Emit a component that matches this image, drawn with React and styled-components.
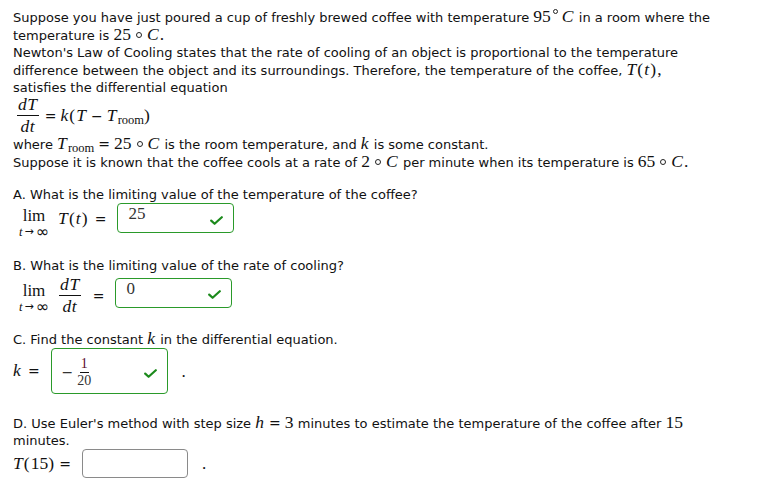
import React from "react";
import styled, { createGlobalStyle } from "styled-components";

const GlobalStyle = createGlobalStyle`
  body {
    margin: 8px;
    background: #ffffff;
  }
`;

export default function App() {
  return (
    <>
      <GlobalStyle />
      <Problem>
        <Para>
          Suppose you have just poured a cup of freshly brewed coffee with temperature{" "}
          <M>
            <N>95</N>
            <Ring $sup />
            <I>C</I>
          </M>{" "}
          in a room where the
          <br />
          temperature is{" "}
          <M>
            <N>25</N>
            <Ring />
            <I>C</I>.
          </M>
          <br />
          Newton's Law of Cooling states that the rate of cooling of an object is proportional to the temperature
          <br />
          difference between the object and its surroundings. Therefore, the temperature of the coffee,{" "}
          <M>
            <I>T</I>(<I>t</I>),
          </M>
          <br />
          satisfies the differential equation
        </Para>
        <Equation>
          <Frac>
            <Num>
              <I>dT</I>
            </Num>
            <Den>
              <I>dt</I>
            </Den>
          </Frac>
          <M>
            <Op>=</Op>
            <I>k</I>(<I>T</I>
            <Op>−</Op>
            <I>T</I>
            <Sub>room</Sub>)
          </M>
        </Equation>
        <Para>
          where{" "}
          <M>
            <I>T</I>
            <Sub>room</Sub>
            <Op>=</Op>
            <N>25</N>
            <Ring />
            <I>C</I>
          </M>{" "}
          is the room temperature, and <M><I>k</I></M> is some constant.
          <br />
          Suppose it is known that the coffee cools at a rate of{" "}
          <M>
            <N>2</N>
            <Ring />
            <I>C</I>
          </M>{" "}
          per minute when its temperature is{" "}
          <M>
            <N>65</N>
            <Ring />
            <I>C</I>.
          </M>
        </Para>

        <Part $top={15}>
          <Question>A. What is the limiting value of the temperature of the coffee?</Question>
          <AnswerRow $left={6}>
            <Lim $mt={6}>
              <LimWord>lim</LimWord>
              <LimUnder>
                <I>t</I>
                <Arrow>→</Arrow>
                <Inf>∞</Inf>
              </LimUnder>
            </Lim>
            <M $ml={9} $mt={7}>
              <I>T</I>(<I>t</I>)<Op $l={6}>=</Op>
            </M>
            <AnswerBox $w={117} $h={30} $ok>
              <BoxValue $top>25</BoxValue>
              <Check />
            </AnswerBox>
          </AnswerRow>
        </Part>

        <Part $top={19}>
          <Question>B. What is the limiting value of the rate of cooling?</Question>
          <AnswerRow $left={6} $mt={2}>
            <Lim $mt={8}>
              <LimWord>lim</LimWord>
              <LimUnder>
                <I>t</I>
                <Arrow>→</Arrow>
                <Inf>∞</Inf>
              </LimUnder>
            </Lim>
            <Frac $ml={10}>
              <Num>
                <I>dT</I>
              </Num>
              <Den>
                <I>dt</I>
              </Den>
            </Frac>
            <M $mt={11} $ml={8}>
              <Op>=</Op>
            </M>
            <AnswerBox $w={117} $h={30} $mt={1.5} $ok>
              <BoxValue $top>0</BoxValue>
              <Check />
            </AnswerBox>
          </AnswerRow>
        </Part>

        <Part $top={15}>
          <Question>
            C. Find the constant <M><I>k</I></M> in the differential equation.
          </Question>
          <AnswerRow $center>
            <M>
              <I>k</I>
              <Op $l={6}>=</Op>
            </M>
            <AnswerBox $w={117} $h={46} $ok>
              <BoxValue>
                <Op $l={0} $r={3}>−</Op>
                <Frac $small>
                  <Num $accent>1</Num>
                  <Den>20</Den>
                </Frac>
              </BoxValue>
              <Check />
            </AnswerBox>
            <Period>.</Period>
          </AnswerRow>
        </Part>

        <Part $top={20}>
          <Question>
            D. Use Euler's method with step size{" "}
            <M>
              <I>h</I>
              <Op>=</Op>
              <N>3</N>
            </M>{" "}
            minutes to estimate the temperature of the coffee after <M><N>15</N></M>
            <br />
            minutes.
          </Question>
          <AnswerRow $center>
            <M>
              <I>T</I>(<N>15</N>)<Op>=</Op>
            </M>
            <AnswerBox $w={106} $h={29} />
            <Period>.</Period>
          </AnswerRow>
        </Part>
      </Problem>
    </>
  );
}

function Check() {
  return (
    <CheckMark viewBox="0 0 13 9" width="13" height="9">
      <path d="M1.2 4.6 L4.6 7.8 L11.8 1.2" fill="none" stroke="#1c8a1c" strokeWidth="2.2" strokeLinecap="round" strokeLinejoin="round" />
    </CheckMark>
  );
}

const serif = `"Liberation Serif", "Times New Roman", serif`;

const Problem = styled.div`
  padding: 0 5px;
  font-family: "DejaVu Sans", Tahoma, sans-serif;
  font-size: 13px;
  line-height: 17px;
  color: #111;
  white-space: nowrap;
`;

const Para = styled.div`
  margin: 0;
`;

const M = styled.span`
  font-family: ${serif};
  font-size: 17.5px;
  line-height: 17px;
  letter-spacing: 1.1px;
  white-space: nowrap;
  margin-left: ${(p) => p.$ml || 0}px;
  margin-top: ${(p) => p.$mt || 0}px;
`;

const I = styled.span`
  font-style: italic;
`;

const N = styled.span`
  font-style: normal;
  letter-spacing: 0;
`;

const Op = styled.span`
  font-family: "DejaVu Sans", sans-serif;
  font-size: 14px;
  letter-spacing: 0;
  margin: 0 ${(p) => p.$r ?? 4}px 0 ${(p) => p.$l ?? 4}px;
`;

const Ring = styled.span`
  display: inline-block;
  box-sizing: border-box;
  width: ${(p) => (p.$sup ? 5 : 6)}px;
  height: ${(p) => (p.$sup ? 5 : 6)}px;
  border: 1px solid #222;
  border-radius: 50%;
  margin: 0 ${(p) => (p.$sup ? 4 : 5)}px 0 ${(p) => (p.$sup ? 2 : 5)}px;
  vertical-align: ${(p) => (p.$sup ? 8 : 2)}px;
`;

const Sub = styled.sub`
  font-size: 12.5px;
  letter-spacing: 0;
  vertical-align: -3px;
  line-height: 0;
  font-style: normal;
`;

const Equation = styled.div`
  display: flex;
  align-items: center;
  gap: 2px;
  padding-left: 4px;
  height: 39px;
`;

const Frac = styled.span`
  display: inline-flex;
  flex-direction: column;
  align-items: center;
  font-family: ${serif};
  font-size: ${(p) => (p.$small ? 14 : 17.5)}px;
  line-height: ${(p) => (p.$small ? 12 : 17)}px;
  letter-spacing: ${(p) => (p.$small ? 0 : 0.6)}px;
  margin-left: ${(p) => p.$ml || 0}px;
`;

const Num = styled.span`
  padding: 0 1px 2px;
  border-bottom: 1px solid #111;
  color: ${(p) => (p.$accent ? "#5a0d2c" : "inherit")};
`;

const Den = styled.span`
  padding: 2px 1px 0;
`;

const Part = styled.div`
  margin-top: ${(p) => p.$top}px;
`;

const Question = styled.div``;

const AnswerRow = styled.div`
  display: flex;
  align-items: ${(p) => (p.$center ? "center" : "flex-start")};
  padding-left: ${(p) => p.$left || 0}px;
  margin-top: ${(p) => p.$mt || 0}px;
`;

const Lim = styled.span`
  display: inline-flex;
  flex-direction: column;
  align-items: center;
  font-family: ${serif};
  margin-top: ${(p) => p.$mt || 0}px;
`;

const LimWord = styled.span`
  font-size: 17px;
  line-height: 14px;
`;

const LimUnder = styled.span`
  display: inline-flex;
  align-items: center;
  font-size: 12.5px;
  line-height: 12px;
  margin-top: 3px;
`;

const Arrow = styled.span`
  font-family: "DejaVu Sans", sans-serif;
  font-size: 11px;
  margin: 0 2px;
`;

const Inf = styled.span`
  font-family: "DejaVu Sans", sans-serif;
  font-size: 16px;
  line-height: 12px;
`;

const AnswerBox = styled.div`
  box-sizing: border-box;
  width: ${(p) => p.$w}px;
  height: ${(p) => p.$h}px;
  margin-left: 7px;
  margin-top: ${(p) => p.$mt || 0}px;
  border: 1px solid ${(p) => (p.$ok ? "#2a9a2a" : "#8a8a8a")};
  border-radius: 4px;
  display: flex;
  align-items: center;
  justify-content: space-between;
  padding: 0 10px 0 10px;
`;

const BoxValue = styled.span`
  display: inline-flex;
  align-items: center;
  align-self: ${(p) => (p.$top ? "flex-start" : "center")};
  font-family: ${serif};
  font-size: 17px;
  line-height: 17px;
  color: #333;
  margin-top: ${(p) => (p.$top ? 1 : 3)}px;
`;

const CheckMark = styled.svg`
  display: block;
  margin-top: 4px;
`;

const Period = styled.span`
  margin-left: 14px;
  font-family: ${serif};
  font-size: 17px;
`;
